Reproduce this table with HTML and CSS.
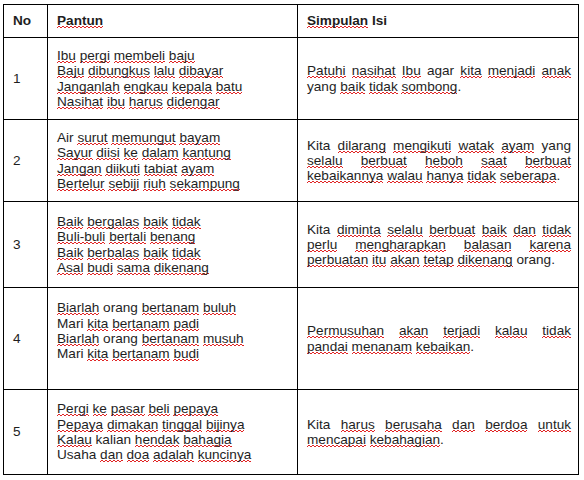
FILE: index.html
```html
<!DOCTYPE html>
<html>
<head>
<meta charset="utf-8">
<link rel="stylesheet" href="styles.css">
</head>
<body>
<table class="tbl">
  <colgroup><col class="c1"><col class="c2"><col class="c3"></colgroup>
  <tr class="r0">
    <th>No</th>
    <th><span class="sp">Pantun</span></th>
    <th><span class="sp">Simpulan</span> Isi</th>
  </tr>
  <tr class="r1">
    <td>1</td>
    <td>
      <div><span class="sp">Ibu</span> <span class="sp">pergi</span> <span class="sp">membeli</span> <span class="sp">baju</span></div>
      <div><span class="sp">Baju</span> <span class="sp">dibungkus</span> <span class="sp">lalu</span> <span class="sp">dibayar</span></div>
      <div><span class="sp">Janganlah</span> <span class="sp">engkau</span> <span class="sp">kepala</span> <span class="sp">batu</span></div>
      <div><span class="sp">Nasihat</span> <span class="sp">ibu</span> <span class="sp">harus</span> <span class="sp">didengar</span></div>
    </td>
    <td>
      <div class="j"><span class="sp">Patuhi</span> <span class="sp">nasihat</span> <span class="sp">Ibu</span> agar <span class="sp">kita</span> <span class="sp">menjadi</span> <span class="sp">anak</span></div>
      <div>yang <span class="sp">baik</span> <span class="sp">tidak</span> <span class="sp">sombong</span>.</div>
    </td>
  </tr>
  <tr class="r2">
    <td>2</td>
    <td>
      <div>Air <span class="sp">surut</span> <span class="sp">memungut</span> <span class="sp">bayam</span></div>
      <div><span class="sp">Sayur</span> <span class="sp">diisi</span> <span class="sp">ke</span> <span class="sp">dalam</span> <span class="sp">kantung</span></div>
      <div><span class="sp">Jangan</span> <span class="sp">diikuti</span> <span class="sp">tabiat</span> <span class="sp">ayam</span></div>
      <div><span class="sp">Bertelur</span> <span class="sp">sebiji</span> <span class="sp">riuh</span> <span class="sp">sekampung</span></div>
    </td>
    <td>
      <div class="j">Kita <span class="sp">dilarang</span> <span class="sp">mengikuti</span> <span class="sp">watak</span> <span class="sp">ayam</span> yang</div>
      <div class="j"><span class="sp">selalu</span> <span class="sp">berbuat</span> <span class="sp">heboh</span> <span class="sp">saat</span> <span class="sp">berbuat</span></div>
      <div><span class="sp">kebaikannya</span> <span class="sp">walau</span> <span class="sp">hanya</span> <span class="sp">tidak</span> <span class="sp">seberapa</span>.</div>
    </td>
  </tr>
  <tr class="r3">
    <td>3</td>
    <td>
      <div><span class="sp">Baik</span> <span class="sp">bergalas</span> <span class="sp">baik</span> <span class="sp">tidak</span></div>
      <div><span class="sp">Buli-buli</span> <span class="sp">bertali</span> <span class="sp">benang</span></div>
      <div><span class="sp">Baik</span> <span class="sp">berbalas</span> <span class="sp">baik</span> <span class="sp">tidak</span></div>
      <div><span class="sp">Asal</span> <span class="sp">budi</span> <span class="sp">sama</span> <span class="sp">dikenang</span></div>
    </td>
    <td>
      <div class="j">Kita <span class="sp">diminta</span> <span class="sp">selalu</span> <span class="sp">berbuat</span> <span class="sp">baik</span> <span class="sp">dan</span> <span class="sp">tidak</span></div>
      <div class="j"><span class="sp">perlu</span> <span class="sp">mengharapkan</span> <span class="sp">balasan</span> <span class="sp">karena</span></div>
      <div><span class="sp">perbuatan</span> <span class="sp">itu</span> <span class="sp">akan</span> <span class="sp">tetap</span> <span class="sp">dikenang</span> orang.</div>
    </td>
  </tr>
  <tr class="r4">
    <td>4</td>
    <td>
      <div><span class="sp">Biarlah</span> orang <span class="sp">bertanam</span> <span class="sp">buluh</span></div>
      <div>Mari <span class="sp">kita</span> <span class="sp">bertanam</span> <span class="sp">padi</span></div>
      <div><span class="sp">Biarlah</span> orang <span class="sp">bertanam</span> <span class="sp">musuh</span></div>
      <div>Mari <span class="sp">kita</span> <span class="sp">bertanam</span> <span class="sp">budi</span></div>
      <div>&nbsp;</div>
    </td>
    <td>
      <div class="j"><span class="sp">Permusuhan</span> <span class="sp">akan</span> <span class="sp">terjadi</span> <span class="sp">kalau</span> <span class="sp">tidak</span></div>
      <div><span class="sp">pandai</span> <span class="sp">menanam</span> <span class="sp">kebaikan</span>.</div>
    </td>
  </tr>
  <tr class="r5">
    <td>5</td>
    <td>
      <div><span class="sp">Pergi</span> <span class="sp">ke</span> <span class="sp">pasar</span> <span class="sp">beli</span> <span class="sp">pepaya</span></div>
      <div><span class="sp">Pepaya</span> <span class="sp">dimakan</span> <span class="sp">tinggal</span> <span class="sp">bijinya</span></div>
      <div><span class="sp">Kalau</span> kalian <span class="sp">hendak</span> <span class="sp">bahagia</span></div>
      <div>Usaha <span class="sp">dan</span> <span class="sp">doa</span> <span class="sp">adalah</span> <span class="sp">kuncinya</span></div>
    </td>
    <td>
      <div class="j">Kita <span class="sp">harus</span> <span class="sp">berusaha</span> <span class="sp">dan</span> <span class="sp">berdoa</span> <span class="sp">untuk</span></div>
      <div><span class="sp">mencapai</span> <span class="sp">kebahagian</span>.</div>
    </td>
  </tr>
</table>
</body>
</html>
```

FILE: styles.css
```css
html, body {
  margin: 0;
  padding: 0;
  background: #ffffff;
}
body {
  padding: 4px 0 0 3px;
  font-family: "Liberation Sans", Arial, sans-serif;
  font-size: 13.6px;
  color: #1e1e1e;
}
.tbl {
  border-collapse: collapse;
  table-layout: fixed;
  width: 575px;
}
.c1 { width: 44px; }
.c2 { width: 250px; }
.c3 { width: 281px; }
.tbl th, .tbl td {
  border: 1px solid #000000;
  vertical-align: middle;
  text-align: left;
  padding: 0 7px 0 9px;
  line-height: 15.3px;
}
.tbl th {
  font-weight: bold;
}
.tbl td div {
  white-space: nowrap;
}
.r0 { height: 33px; }
.r1 { height: 82px; }
.r2 { height: 82px; }
.r3 { height: 86px; }
.r4 { height: 102px; }
.r5 { height: 85px; }
.j {
  text-align: justify;
  text-align-last: justify;
}
.sp {
  background-image:
    linear-gradient(-45deg, transparent calc(50% - 0.6px), #e02424 calc(50% - 0.6px), #e02424 calc(50% + 0.6px), transparent calc(50% + 0.6px)),
    linear-gradient(45deg, transparent calc(50% - 0.6px), #e02424 calc(50% - 0.6px), #e02424 calc(50% + 0.6px), transparent calc(50% + 0.6px));
  background-size: 4px 2px, 4px 2px;
  background-repeat: repeat-x, repeat-x;
  background-position: -1px 100%, 1px 100%;
}
```
